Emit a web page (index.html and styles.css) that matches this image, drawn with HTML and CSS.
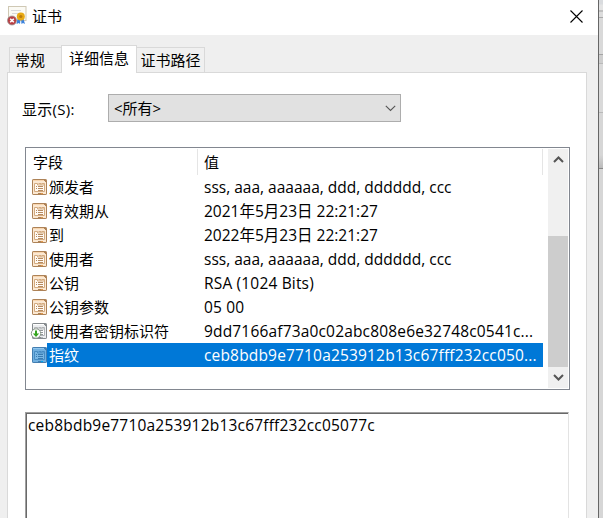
FILE: index.html
```html
<!DOCTYPE html>
<html lang="zh-CN">
<head>
<meta charset="utf-8">
<title>证书</title>
<link rel="stylesheet" href="styles.css">
</head>
<body>
<svg class="defs" width="0" height="0" aria-hidden="true">
  <symbol id="field" viewBox="0 0 15 16">
    <rect x=".5" y=".5" width="14" height="15" rx=".6" fill="var(--paper)" stroke="var(--edge)"/>
    <path d="M1 1.500h11" stroke="var(--bar)"/>
    <path d="M12 1h2v2h-1v-1h-1z" fill="var(--edge)"/>
    <path d="M2.500 12.500v-8h3v1.500h7v6.500z" fill="var(--inner)" stroke="var(--mid)"/>
    <path d="M6.500 4.500h2.500v1.500M9.500 4.500h3v1.500" fill="none" stroke="var(--mid)"/>
    <path d="M4 7.500h1M6 7.500h5M4 9.500h1M6 9.500h5M6 11.500h5" stroke="var(--line)"/>
    <path d="M6 14h3v1h-3z" fill="var(--edge)"/>
    <path d="M9 14h2v1h-2z" fill="var(--mark)"/>
  </symbol>
</svg>
<div class="screen">
  <main class="dialog">
    <header class="titlebar">
      <svg class="cert" width="20" height="20" viewBox="0 0 20 20">
        <rect x="1.500" y=".5" width="17.500" height="14" fill="#fbfaf4" stroke="#cfc8b4"/>
        <path d="M4 4.500h10M5 7.500h6" stroke="#d8dadc"/>
        <path d="M10.500 13l-1 5 2.300-1 1.200 1 .5-5zM14 13l.5 5 1.500-1 2 1-1.500-5z" fill="#3b82dc"/>
        <circle cx="13.800" cy="10.500" r="4" fill="#e8a914"/>
        <circle cx="13.800" cy="10.500" r="1.600" fill="#b97a0e"/>
        <circle cx="5" cy="14.500" r="4.500" fill="#b93d42" stroke="#999" stroke-width=".8"/>
        <path d="M3.200 12.700l3.600 3.600M6.800 12.700l-3.600 3.600" stroke="#fff" stroke-width="1.600"/>
      </svg>
      <h1>证书</h1>
      <svg class="close" width="13" height="13" viewBox="0 0 13 13"><path d="M.5.5l12 12M12.500.5l-12 12" stroke="#000" stroke-width="1.100"/></svg>
    </header>
    <nav class="tabs">
      <div class="tab general">常规</div>
      <div class="tab active">详细信息</div>
      <div class="tab path">证书路径</div>
    </nav>
    <section class="panel">
      <div class="filter">
        <label>显示(S):</label>
        <div class="select"><span>&lt;所有&gt;</span><svg width="11" height="7" viewBox="0 0 11 7"><path d="M.8.8l4.700 4.700L10.200.8" fill="none" stroke="#555" stroke-width="1.100"/></svg></div>
      </div>
      <div class="list">
        <div class="table">
          <div class="head"><div>字段</div><div>值</div></div>
          <div class="row"><svg><use href="#field"/></svg><div class="name">颁发者</div><div class="value">sss, aaa, aaaaaa, ddd, dddddd, ccc</div></div>
          <div class="row"><svg><use href="#field"/></svg><div class="name">有效期从</div><div class="value">2021年5月23日 22:21:27</div></div>
          <div class="row"><svg><use href="#field"/></svg><div class="name">到</div><div class="value">2022年5月23日 22:21:27</div></div>
          <div class="row"><svg><use href="#field"/></svg><div class="name">使用者</div><div class="value">sss, aaa, aaaaaa, ddd, dddddd, ccc</div></div>
          <div class="row"><svg><use href="#field"/></svg><div class="name">公钥</div><div class="value hex">RSA (1024 Bits)</div></div>
          <div class="row"><svg><use href="#field"/></svg><div class="name">公钥参数</div><div class="value hex">05 00</div></div>
          <div class="row extension"><svg><use href="#field"/><circle cx="4" cy="10.500" r="4.700" fill="#fff" stroke="#8c9a8c"/><path d="M3 7.500h2v3h2.200L4 14 .8 10.500H3z" fill="#35a51f"/></svg><div class="name">使用者密钥标识符</div><div class="value hex">9dd7166af73a0c02abc808e6e32748c0541c...</div></div>
          <div class="row selected"><svg><use href="#field"/></svg><div class="name">指纹</div><div class="value hex">ceb8bdb9e7710a253912b13c67fff232cc050...</div></div>
        </div>
        <div class="scrollbar">
          <svg width="11" height="7" viewBox="0 0 11 7"><path d="M1 6l4.500-4.500L10 6" fill="none" stroke="#555" stroke-width="2"/></svg>
          <div class="thumb"></div>
          <svg width="11" height="7" viewBox="0 0 11 7"><path d="M1 1l4.500 4.500L10 1" fill="none" stroke="#555" stroke-width="2"/></svg>
        </div>
      </div>
      <div class="detail">ceb8bdb9e7710a253912b13c67fff232cc05077c</div>
    </section>
  </main>
  <aside class="behind"></aside>
</div>
</body>
</html>
```

FILE: styles.css
```css
* { box-sizing: border-box; }
body {
  margin: 0;
  background: #fff;
  color: #000;
  font: 15px/24px "Open Sans", "Noto Sans CJK SC", sans-serif;
  white-space: nowrap;
}
.defs { display: block; }
.screen { display: flex; width: 603px; height: 518px; overflow: hidden; }
.dialog {
  display: flex;
  flex-direction: column;
  width: 599px;
  background: #efefef;
  border-right: 1px solid #666;
}
.behind {
  flex: 1;
  background: linear-gradient(#d9dbde 0 4px, #e4e4e4 5px 10px, #c0c0c0 10px 12px, #dcdcdc 12px 17px, #a9a9a9 17px 18px, #d9d9d9 18px 54px, #a4a4a4 54px 55px, #cecece 55px 63px, #b9b9b9 63px 64px, #d9d9d9 64px 112px, #b9b9b9 112px 113px, #d6d6d6 113px 155px, #bababa 168px, #888 168px 169px, #d6d6d6 169px);
}
.titlebar {
  display: flex;
  flex: none;
  align-items: center;
  height: 35px;
  padding: 0 15px 3px 7px;
  background: #fff;
}
.titlebar h1 { flex: 1; margin: 0 0 0 5px; font: inherit; }
.tabs { display: flex; flex: none; align-items: flex-end; height: 38px; padding-left: 9px; z-index: 1; }
.tab {
  height: 26px;
  border: 1px solid #d9d9d9;
  background: #f0f0f0;
  text-align: center;
}
.general { width: 52px; padding-right: 11px; border-right: 0; }
.active { width: 76px; height: 28px; background: #fff; border-bottom: 0; }
.path { width: 68px; border-left: 0; }
.panel {
  flex: 1;
  min-height: 0;
  width: 580px;
  margin: -1px 0 0 7px;
  padding: 21px 16px 0 17px;
  background: #fff;
  border: 1px solid #d9d9d9;
  border-bottom: 0;
}
.filter { display: flex; align-items: center; height: 28px; margin-left: -3px; }
.filter label { width: 86px; padding-top: 2px; letter-spacing: .3px; }
.select {
  display: flex;
  align-items: center;
  justify-content: space-between;
  width: 293px;
  height: 28px;
  padding: 0 4px 0 5px;
  border: 1px solid #adadad;
  background: #e1e1e1;
}
.list {
  display: flex;
  justify-content: space-between;
  width: 545px;
  height: 243px;
  margin-top: 25px;
  padding: 1px;
  border: 1px solid #828790;
}
.table { width: 516px; }
.head { display: flex; height: 26px; line-height: 27px; }
.head div { border-right: 1px solid #e5e5e5; padding-left: 6px; }
.head div:first-child { width: 171px; }
.head div:last-child { width: 345px; }
.row { display: flex; height: 24px; padding-left: 5px;
  --paper: #fbe8d2; --edge: #ad8257; --bar: #f8d5ae; --inner: #fffaf4; --mid: #d3ab80; --line: #b78b60; --mark: #e29a4d; }
.row svg { width: 15px; height: 16px; margin-top: 4px; overflow: visible; }
.name { width: 150px; padding-left: 2px; }
.value { flex: 1; padding-left: 7px; font-size: 15.5px; }
.hex { letter-spacing: .17px; }
.extension { --paper: #eceef0; --edge: #858a8e; --bar: #fff; --inner: #fff; --mid: #b2b5b8; --line: #92979a; --mark: #b2b5b8; }
.selected { --paper: #70afdf; --edge: #427db0; --bar: #91c8f0; --inner: #78b6e4; --mid: #468bc2; --line: #397bb0; --mark: #00a8ee; }
.selected .name, .selected .value { background: #0078d7; color: #fff; }
.scrollbar {
  display: flex;
  flex-direction: column;
  align-items: center;
  width: 20px;
  padding: 7px 0;
  background: #f0f0f0;
}
.thumb { width: 20px; height: 131px; margin: 73px 0 7px; background: #cdcdcd; }
.detail {
  width: 544px;
  height: 120px;
  margin-top: 22px;
  padding: 1px 2px;
  border: 1px solid;
  border-color: #a0a0a0 #e3e3e3 #fff #a0a0a0;
  box-shadow: inset 1px 1px #696969;
  font-size: 15.5px;
  line-height: 22px;
  letter-spacing: .2px;
}
```
